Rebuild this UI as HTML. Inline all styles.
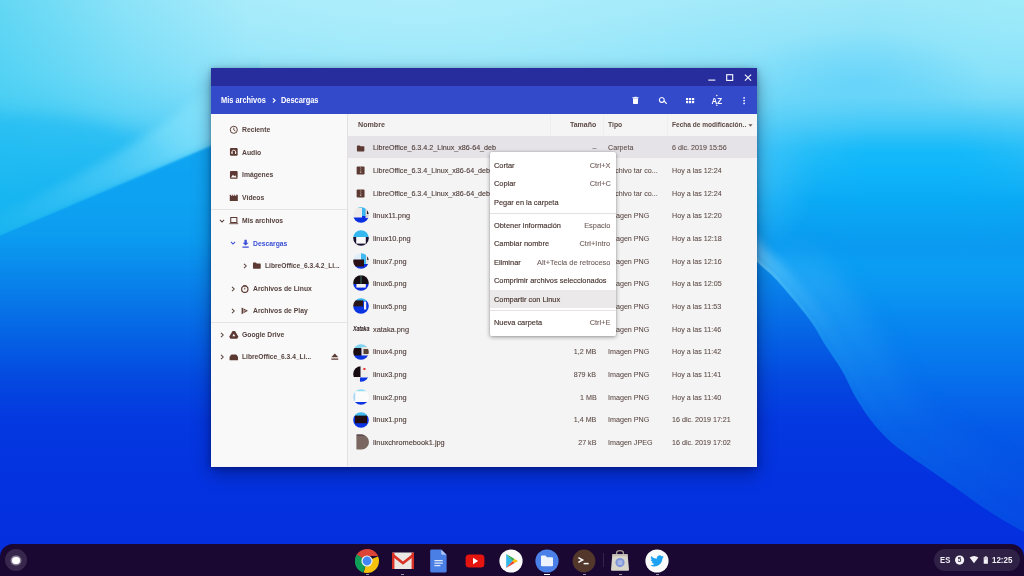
<!DOCTYPE html>
<html lang="es"><head><meta charset="utf-8"><title>Archivos</title>
<style>
html,body{margin:0;padding:0;background:#0633dc}
body{width:1024px;height:576px;overflow:hidden;position:relative;font-family:"Liberation Sans",sans-serif;-webkit-font-smoothing:antialiased}
.wall{position:absolute;left:0;top:0}
.abs{position:absolute;overflow:visible}
.win{position:absolute;left:211px;top:68px;width:546px;height:398.5px;background:#f5f4f4;box-shadow:0 6px 17px rgba(0,0,40,.40),0 1px 5px rgba(0,0,40,.30)}
.tb{position:absolute;left:211px;top:68px;width:546px;height:18px;background:#272d9d}
.tool{position:absolute;left:211px;top:86px;width:546px;height:27.6px;background:#334bcb}
.crumb{position:absolute;color:#fff;font-weight:bold;font-size:8.6px;line-height:12px;white-space:nowrap}
.sx{display:inline-block;transform:scaleX(var(--s));transform-origin:left center;white-space:nowrap}
.side{position:absolute;left:211px;top:113.6px;width:136.5px;height:352.9px;background:#faf9f9}
.vsep{position:absolute;left:347px;top:113.6px;width:1px;height:352.9px;background:#e2e0e0}
.list{position:absolute;left:348px;top:113.6px;width:409px;height:352.9px;background:#f5f4f4}
.hdr{position:absolute;left:348px;top:113.6px;width:409px;height:22.2px;background:#f6f5f5;border-bottom:1px solid #e6e4e4}
.csep{position:absolute;top:113.6px;width:1px;height:22.2px;background:#efeded}
.hsep{position:absolute;left:211px;width:136px;height:1px;background:#e6e3e3}
.sl{position:absolute;color:#55423e;font-weight:bold;font-size:7.9px;line-height:12px;white-space:nowrap;--s:1}
.sl .sx{transform:scaleX(calc(var(--s) * .86))}
.hl{position:absolute;color:#5a4844;font-weight:bold;font-size:7.5px;line-height:12px;white-space:nowrap}
.hl .sx{transform:scaleX(calc(var(--s) * .905))}
.selrow{position:absolute;left:348px;top:136.3px;width:409px;height:22.2px;background:#e5e3e7}
.ft{position:absolute;color:#4c3b37;-webkit-text-stroke:0.12px #4c3b37;font-size:8px;line-height:12px;white-space:nowrap;--fs:.893}
.ft.lt{color:#5c4b47;-webkit-text-stroke:0.08px #5c4b47}
.xa{position:absolute;color:#2a1a1c;font-size:6.4px;line-height:10px;font-weight:bold;font-style:italic;white-space:nowrap;letter-spacing:-0.3px}
.menu{position:absolute;left:489.5px;top:151.8px;width:126px;height:184px;background:#fff;border-radius:1.5px;box-shadow:0 1px 4px rgba(0,0,0,.4),0 0 1px rgba(0,0,0,.3)}
.mhl{position:absolute;left:489.5px;top:290.2px;width:126px;height:17.8px;background:#ebe9e9}
.msep{position:absolute;left:489.5px;width:126px;height:1px;background:#e4e1e1}
.mi{position:absolute;color:#47342f;-webkit-text-stroke:0.16px #47342f;font-size:8px;line-height:12px;white-space:nowrap;--ms:.924}
.mi.ms{color:#74635f;-webkit-text-stroke:0.12px #74635f}
.shelf{position:absolute;left:0;top:543.6px;width:1024px;height:40px;background:#1a0833;border-radius:13px 13px 0 0}
.launch{position:absolute;left:5px;top:549.3px;width:22px;height:22px;border-radius:50%;background:rgba(255,255,255,.13)}
.launch i{position:absolute;left:7.4px;top:7.4px;width:7.2px;height:7.2px;border-radius:50%;background:#fff;box-shadow:0 0 0 1.5px rgba(255,255,255,.4)}
.tray{position:absolute;left:934px;top:549px;width:85.5px;height:22.4px;border-radius:11.2px;background:#2e2145}
.tt{position:absolute;color:#f2eff5;font-weight:bold;font-size:8.4px;line-height:13px;white-space:nowrap}
</style></head><body>
<svg class="wall" width="1024" height="576" viewBox="0 0 1024 576"><defs><linearGradient id="gv" gradientUnits="userSpaceOnUse" x1="0" y1="0" x2="0" y2="576"><stop offset="0.0000" stop-color="#9ce7f9"/><stop offset="0.1302" stop-color="#80def9"/><stop offset="0.1910" stop-color="#68d5f8"/><stop offset="0.2604" stop-color="#3cc3f7"/><stop offset="0.3472" stop-color="#0eaaf4"/><stop offset="0.4167" stop-color="#0b9cf0"/><stop offset="0.5208" stop-color="#0878e8"/><stop offset="0.5903" stop-color="#0560e4"/><stop offset="0.6597" stop-color="#0448e0"/><stop offset="0.7292" stop-color="#0438e0"/><stop offset="0.8333" stop-color="#0432e0"/><stop offset="1.0000" stop-color="#042ede"/></linearGradient><linearGradient id="gR" gradientUnits="userSpaceOnUse" x1="0" y1="0" x2="0" y2="576"><stop offset="0.4080" stop-color="#0aa0f3" stop-opacity="0"/><stop offset="0.4549" stop-color="#0a9ef3" stop-opacity="1"/><stop offset="0.5035" stop-color="#0a96f2" stop-opacity="1"/><stop offset="0.5556" stop-color="#0888f0" stop-opacity="1"/><stop offset="0.6076" stop-color="#077cee" stop-opacity="1"/><stop offset="0.6944" stop-color="#0666ea" stop-opacity="1"/><stop offset="0.7465" stop-color="#055ae7" stop-opacity="1"/><stop offset="0.8681" stop-color="#054ae4" stop-opacity="1"/><stop offset="0.9462" stop-color="#0544e2" stop-opacity="1"/></linearGradient><linearGradient id="gB" gradientUnits="userSpaceOnUse" x1="0" y1="0" x2="0" y2="576"><stop offset="0.2083" stop-color="#10a6f3" stop-opacity="1"/><stop offset="0.3472" stop-color="#0ea2f2" stop-opacity="1"/><stop offset="0.4097" stop-color="#0c9cf0" stop-opacity="1"/><stop offset="0.4774" stop-color="#0a88ec" stop-opacity="0"/></linearGradient><linearGradient id="gL" x1="0" y1="0" x2="1" y2="0"><stop offset="0" stop-color="#1fc4ee" stop-opacity="0.46"/><stop offset="0.5" stop-color="#1fc4ee" stop-opacity="0.18"/><stop offset="1" stop-color="#1fc4ee" stop-opacity="0"/></linearGradient><linearGradient id="gW" gradientUnits="userSpaceOnUse" x1="0" y1="0" x2="230" y2="0"><stop offset="0" stop-color="#84e2fb" stop-opacity="0.05"/><stop offset="0.5" stop-color="#84e2fb" stop-opacity="0.36"/><stop offset="1" stop-color="#84e2fb" stop-opacity="0.95"/></linearGradient><radialGradient id="gT" cx="420" cy="-20" r="1" gradientUnits="userSpaceOnUse" gradientTransform="translate(420 -20) scale(460 210) translate(-420 20)"><stop offset="0" stop-color="#b6f1fc" stop-opacity="0.8"/><stop offset="0.5" stop-color="#b4f0fc" stop-opacity="0.42"/><stop offset="1" stop-color="#b4f0fc" stop-opacity="0"/></radialGradient><radialGradient id="gP" cx="757" cy="175" r="1" gradientUnits="userSpaceOnUse" gradientTransform="translate(757 175) scale(60 75) translate(-757 -175)"><stop offset="0" stop-color="#5ccdfb" stop-opacity="0.5"/><stop offset="1" stop-color="#66d0fb" stop-opacity="0"/></radialGradient><radialGradient id="gQ" cx="1024" cy="0" r="1" gradientUnits="userSpaceOnUse" gradientTransform="translate(1024 0) scale(160 120) translate(-1024 0)"><stop offset="0" stop-color="#a0eefa" stop-opacity="0.6"/><stop offset="1" stop-color="#a0eefa" stop-opacity="0"/></radialGradient><radialGradient id="gU" cx="860" cy="82" r="1" gradientUnits="userSpaceOnUse" gradientTransform="translate(860 82) scale(130 52) translate(-860 -82)"><stop offset="0" stop-color="#54ccfa" stop-opacity="0.5"/><stop offset="1" stop-color="#54ccfa" stop-opacity="0"/></radialGradient><linearGradient id="gE" gradientUnits="userSpaceOnUse" x1="0" y1="0" x2="0" y2="576"><stop offset="0.4427" stop-color="#a4e2fc" stop-opacity="0.95"/><stop offset="0.4948" stop-color="#6acafa" stop-opacity="0.8"/><stop offset="0.5903" stop-color="#2c9cf3" stop-opacity="0.55"/><stop offset="0.7292" stop-color="#1070ec" stop-opacity="0.45"/><stop offset="0.9375" stop-color="#0a54e6" stop-opacity="0.4"/></linearGradient><linearGradient id="gE2" gradientUnits="userSpaceOnUse" x1="0" y1="0" x2="0" y2="576"><stop offset="0.4167" stop-color="#34b0f8" stop-opacity="0.0"/><stop offset="0.4774" stop-color="#34b0f8" stop-opacity="0.55"/><stop offset="0.5903" stop-color="#2298f3" stop-opacity="0.42"/><stop offset="0.7292" stop-color="#1478ee" stop-opacity="0.25"/><stop offset="0.9028" stop-color="#0c5ce8" stop-opacity="0.12"/></linearGradient><filter id="b12" x="-30%" y="-30%" width="160%" height="160%"><feGaussianBlur color-interpolation-filters="sRGB" stdDeviation="11"/></filter><linearGradient id="gS" gradientUnits="userSpaceOnUse" x1="0" y1="0" x2="0" y2="576"><stop offset="0.1701" stop-color="#0cb8fa" stop-opacity="0"/><stop offset="0.2222" stop-color="#0cb8fa" stop-opacity="0.3"/><stop offset="0.2639" stop-color="#08b6fa" stop-opacity="0.74"/><stop offset="0.2986" stop-color="#08b4fa" stop-opacity="0.8"/><stop offset="0.3611" stop-color="#06a8f6" stop-opacity="0.55"/><stop offset="0.4427" stop-color="#0898f2" stop-opacity="0"/></linearGradient><linearGradient id="gSm" gradientUnits="userSpaceOnUse" x1="757" y1="0" x2="1024" y2="0"><stop offset="0" stop-color="#fff" stop-opacity="0.2"/><stop offset="0.4" stop-color="#fff" stop-opacity="1"/><stop offset="0.75" stop-color="#fff" stop-opacity="1"/><stop offset="1" stop-color="#fff" stop-opacity="0.6"/></linearGradient><mask id="mS"><rect x="700" y="0" width="330" height="576" fill="url(#gSm)"/></mask><filter id="b2" x="-10%" y="-10%" width="120%" height="120%"><feGaussianBlur color-interpolation-filters="sRGB" stdDeviation="1.2"/></filter><filter id="b5" x="-20%" y="-20%" width="140%" height="140%"><feGaussianBlur color-interpolation-filters="sRGB" stdDeviation="5"/></filter><filter id="b8" x="-20%" y="-20%" width="140%" height="140%"><feGaussianBlur color-interpolation-filters="sRGB" stdDeviation="8"/></filter><clipPath id="cR"><path d="M735.0 238.0 C738.7 242.0 750.1 255.0 757.0 262.0 C763.9 269.0 767.8 270.5 776.5 280.0 C785.2 289.5 800.8 308.1 809.0 319.0 C817.2 329.9 820.0 336.9 825.5 345.5 C831.0 354.1 836.9 361.8 842.0 370.5 C847.1 379.2 850.8 389.2 856.0 398.0 C861.2 406.8 867.0 415.5 873.0 423.0 C879.0 430.5 885.1 436.9 892.0 443.0 C898.9 449.1 907.0 454.2 914.5 459.5 C922.0 464.8 929.1 469.4 936.7 474.7 C944.3 479.9 951.1 484.8 960.0 491.0 C968.9 497.2 979.3 505.2 990.0 512.0 C1000.7 518.8 1012.3 525.7 1024.0 532.0 C1035.7 538.3 1054.0 547.0 1060.0 550.0 L1060 200 L735 200 Z"/></clipPath><clipPath id="cA"><path d="M-30 0 L260 0 L260 125.2 L-30 248.8 Z"/></clipPath></defs><rect width="1024" height="576" fill="url(#gv)"/><rect width="1024" height="200" fill="url(#gT)"/><rect x="860" width="164" height="130" fill="url(#gQ)"/><rect x="720" y="20" width="280" height="120" fill="url(#gU)"/><rect x="0" y="0" width="250" height="260" fill="url(#gL)" clip-path="url(#cA)"/><g clip-path="url(#cA)"><path d="M-30 112 C 40 112, 110 116, 170 150 L 120 230 L -30 260 Z" fill="#18b6f2" opacity="0.5" filter="url(#b8)"/><path d="M260 60 L260 125.2 L-30 248.8 L-30 226 C 60 188, 150 140, 200 95 Z" fill="url(#gW)" filter="url(#b5)"/></g><path d="M-30 248.8 L260 125.2 L260 280 L-30 280 Z" fill="url(#gB)" filter="url(#b2)"/><rect x="757" y="100" width="80" height="160" fill="url(#gP)"/><rect x="740" y="90" width="290" height="170" fill="url(#gS)" mask="url(#mS)"/><path d="M735.0 238.0 C738.7 242.0 750.1 255.0 757.0 262.0 C763.9 269.0 767.8 270.5 776.5 280.0 C785.2 289.5 800.8 308.1 809.0 319.0 C817.2 329.9 820.0 336.9 825.5 345.5 C831.0 354.1 836.9 361.8 842.0 370.5 C847.1 379.2 850.8 389.2 856.0 398.0 C861.2 406.8 867.0 415.5 873.0 423.0 C879.0 430.5 885.1 436.9 892.0 443.0 C898.9 449.1 907.0 454.2 914.5 459.5 C922.0 464.8 929.1 469.4 936.7 474.7 C944.3 479.9 951.1 484.8 960.0 491.0 C968.9 497.2 979.3 505.2 990.0 512.0 C1000.7 518.8 1012.3 525.7 1024.0 532.0 C1035.7 538.3 1054.0 547.0 1060.0 550.0 L1060 200 L735 200 Z" fill="url(#gR)"/><g clip-path="url(#cR)"><path d="M742.0 235.0 C745.7 239.0 757.1 252.0 764.0 259.0 C770.9 266.0 774.8 267.5 783.5 277.0 C792.2 286.5 807.8 305.1 816.0 316.0 C824.2 326.9 827.0 333.9 832.5 342.5 C838.0 351.1 843.9 358.8 849.0 367.5 C854.1 376.2 857.8 386.2 863.0 395.0 C868.2 403.8 874.0 412.5 880.0 420.0 C886.0 427.5 892.1 433.9 899.0 440.0 C905.9 446.1 914.0 451.2 921.5 456.5 C929.0 461.8 936.1 466.4 943.7 471.7 C951.3 476.9 958.1 481.8 967.0 488.0 C975.9 494.2 986.3 502.2 997.0 509.0 C1007.7 515.8 1019.3 522.7 1031.0 529.0 C1042.7 535.3 1061.0 544.0 1067.0 547.0" fill="none" stroke="url(#gE)" stroke-width="16" filter="url(#b5)" opacity="0.55"/><path d="M759.0 227.0 C762.7 231.0 774.1 244.0 781.0 251.0 C787.9 258.0 791.8 259.5 800.5 269.0 C809.2 278.5 824.8 297.1 833.0 308.0 C841.2 318.9 844.0 325.9 849.5 334.5 C855.0 343.1 860.9 350.8 866.0 359.5 C871.1 368.2 874.8 378.2 880.0 387.0 C885.2 395.8 891.0 404.5 897.0 412.0 C903.0 419.5 909.1 425.9 916.0 432.0 C922.9 438.1 931.0 443.2 938.5 448.5 C946.0 453.8 953.1 458.4 960.7 463.7 C968.3 468.9 975.1 473.8 984.0 480.0 C992.9 486.2 1003.3 494.2 1014.0 501.0 C1024.7 507.8 1036.3 514.7 1048.0 521.0 C1059.7 527.3 1078.0 536.0 1084.0 539.0" fill="none" stroke="url(#gE2)" stroke-width="46" filter="url(#b12)"/><path d="M736.5 237.2 C740.2 241.2 751.6 254.2 758.5 261.2 C765.4 268.2 769.3 269.7 778.0 279.2 C786.7 288.7 802.3 307.3 810.5 318.2 C818.7 329.1 821.5 336.1 827.0 344.7 C832.5 353.3 838.4 360.9 843.5 369.7 C848.6 378.4 852.3 388.4 857.5 397.2 C862.7 405.9 868.5 414.7 874.5 422.2 C880.5 429.7 886.6 436.1 893.5 442.2 C900.4 448.3 908.5 453.4 916.0 458.7 C923.5 464.0 930.6 468.6 938.2 473.9 C945.8 479.1 952.6 484.0 961.5 490.2 C970.4 496.4 980.8 504.4 991.5 511.2 C1002.2 518.0 1013.8 524.9 1025.5 531.2 C1037.2 537.5 1055.5 546.2 1061.5 549.2" fill="none" stroke="url(#gE)" stroke-width="2" filter="url(#b2)" opacity="0.6"/></g></svg>
<div class="win"></div>

<div class="tb"></div>
<div class="tool"></div>
<svg class="abs" style="left:700px;top:68px" width="57" height="46" viewBox="700 68 57 46">
  <g stroke="#fff" stroke-width="1.1" fill="none">
    <path d="M708.3 80.1 H715.3"/>
    <rect x="726.7" y="74.7" width="6" height="5.7"/>
    <path d="M744.9 74.6 L751.1 80.6 M751.1 74.6 L744.9 80.6"/>
  </g>
</svg>
<svg class="abs" style="left:625px;top:92px;will-change:transform" width="130" height="18" viewBox="625 92 130 18">
  <g fill="#fff">
    <!-- trash -->
    <path d="M633 98.6 h5 v4.6 q0 .7 -.7 .7 h-3.6 q-.7 0 -.7 -.7 z M632.4 97.3 h1.8 l.5 -.6 h1.6 l.5 .6 h1.8 v.9 h-6.2 z"/>
    <!-- search -->
    <path d="M661.8 96.9 a3 3 0 1 0 0.01 0 z M661.8 98 a1.9 1.9 0 1 1 -0.01 0 z" fill-rule="evenodd"/>
    <path d="M663.6 101.3 l.8 -.8 2.7 2.8 -.9 .9 z"/>
    <!-- grid -->
    <g>
      <rect x="686" y="98" width="2.2" height="2.2"/><rect x="689" y="98" width="2.2" height="2.2"/><rect x="692" y="98" width="2.2" height="2.2"/>
      <rect x="686" y="101" width="2.2" height="2.2"/><rect x="689" y="101" width="2.2" height="2.2"/><rect x="692" y="101" width="2.2" height="2.2"/>
    </g>
    <!-- more -->
    <circle cx="744.1" cy="97.8" r="0.85"/><circle cx="744.1" cy="100.6" r="0.85"/><circle cx="744.1" cy="103.4" r="0.85"/>
    <!-- az dots -->
    <circle cx="716.8" cy="95.4" r="0.75"/><circle cx="716.8" cy="105.2" r="0.75"/>
  </g>
  <text x="711.4" y="103.7" font-family="Liberation Sans, sans-serif" font-weight="bold" font-size="8.6" fill="#fff" textLength="10.6" lengthAdjust="spacingAndGlyphs">AZ</text>
</svg>
<div class="crumb" style="left:221px;top:94.0px"><span class="sx" style="--s:.862">Mis archivos</span></div>
<svg class="abs" style="left:270px;top:96px" width="8" height="9" viewBox="0 0 8 9"><path d="M2.9 2.3 L5.1 4.5 L2.9 6.7" fill="none" stroke="#fff" stroke-width="1.15"/></svg>
<div class="crumb" style="left:281px;top:94.0px"><span class="sx" style="--s:.862">Descargas</span></div>

<div class="side"></div>
<svg class="abs" style="left:229.0px;top:124.7px" width="9.6" height="9.6" viewBox="0 0 10 10"><circle cx="5" cy="5" r="3.7" fill="none" stroke="#5c3a33" stroke-width="1"/><path d="M5 2.8 V5.2 L6.8 6.2" fill="none" stroke="#5c3a33" stroke-width="0.9"/></svg>
<div class="sl" style="left:241.9px;top:123.5px;"><span class="sx" style="--s:1.0">Reciente</span></div>
<svg class="abs" style="left:229.0px;top:147.3px" width="9.6" height="9.6" viewBox="0 0 10 10"><rect x="1" y="1" width="8" height="8" rx="1" fill="#5c3a33"/><path d="M3 6.5 v-1.2 a2 2 0 0 1 4 0 v1.2" stroke="#faf9f9" stroke-width="0.9" fill="none"/><rect x="2.6" y="5.4" width="1.2" height="1.8" fill="#faf9f9"/><rect x="6.2" y="5.4" width="1.2" height="1.8" fill="#faf9f9"/></svg>
<div class="sl" style="left:241.9px;top:146.6px;"><span class="sx" style="--s:1.0">Audio</span></div>
<svg class="abs" style="left:229.0px;top:169.6px" width="9.6" height="9.6" viewBox="0 0 10 10"><rect x="1" y="1" width="8" height="8" rx="1" fill="#5c3a33"/><path d="M2 7.7 L4.1 4.9 L5.5 6.5 L6.5 5.5 L8 7.7 Z" fill="#faf9f9"/></svg>
<div class="sl" style="left:241.9px;top:168.9px;"><span class="sx" style="--s:1.0">Imágenes</span></div>
<svg class="abs" style="left:229.0px;top:192.5px" width="9.6" height="9.6" viewBox="0 0 10 10"><path d="M0.8 1.7 h1.1 l.8 1.5 h1 l-.8 -1.5 h1.1 l.8 1.5 h1 l-.8 -1.5 h1.1 l.8 1.5 h1 l-.8 -1.5 h2.1 v6.6 h-8.400 z" fill="#5c3a33"/></svg>
<div class="sl" style="left:241.9px;top:191.8px;"><span class="sx" style="--s:1.0">Vídeos</span></div>
<div class="hsep" style="top:208.6px"></div>
<svg class="abs" style="left:229.0px;top:215.8px" width="9.6" height="9.6" viewBox="0 0 10 10"><path d="M1.8 1.5 h6.4 v5.2 h-6.4 z" fill="none" stroke="#5c3a33" stroke-width="1.1"/><path d="M0.4 7.6 h9.2 v0.9 h-9.2 z" fill="#5c3a33"/></svg>
<div class="sl" style="left:241.9px;top:214.6px;"><span class="sx" style="--s:1.0">Mis archivos</span></div>
<svg class="abs" style="left:217.8px;top:216.6px" width="8" height="8" viewBox="0 0 8 8"><path d="M1.9 2.9 L4 5.0 L6.1 2.9" fill="none" stroke="#55423e" stroke-width="1.05"/></svg>
<svg class="abs" style="left:240.6px;top:238.6px" width="9.6" height="9.6" viewBox="0 0 10 10"><path d="M3.6 0.8 h2.4 v3 h1.9 l-3.1 3 l-3.1 -3 h1.9 z M1.5 7.9 h6.6 v1.1 h-6.6 z" fill="#3a4fd6"/></svg>
<div class="sl" style="left:253.2px;top:238.3px;color:#3a4fd6;"><span class="sx" style="--s:1.0">Descargas</span></div>
<svg class="abs" style="left:229.2px;top:239.4px" width="8" height="8" viewBox="0 0 8 8"><path d="M1.9 2.9 L4 5.0 L6.1 2.9" fill="none" stroke="#3a4fd6" stroke-width="1.05"/></svg>
<svg class="abs" style="left:252.4px;top:261.1px" width="9.6" height="9.6" viewBox="0 0 10 10"><path d="M1 2.2 q0 -.7 .7 -.7 h2.3 l1 1 h3.4 q.7 0 .7 .7 v4.2 q0 .7 -.7 .7 h-6.7 q-.7 0 -.7 -.7 z" fill="#5c3a33"/></svg>
<div class="sl" style="left:264.8px;top:259.9px;"><span class="sx" style="--s:0.985">LibreOffice_6.3.4.2_Li...</span></div>
<svg class="abs" style="left:240.6px;top:261.9px" width="8" height="8" viewBox="0 0 8 8"><path d="M3.0 1.8 L5.2 4 L3.0 6.2" fill="none" stroke="#55423e" stroke-width="1.05"/></svg>
<svg class="abs" style="left:239.8px;top:283.8px" width="9.6" height="9.6" viewBox="0 0 10 10"><circle cx="5" cy="5.4" r="3.3" fill="none" stroke="#5c3a33" stroke-width="1.25"/><path d="M3.3 1.2 h3.4 v1.3 h-3.400 z" fill="#5c3a33"/><path d="M5 3.9 v1.9" stroke="#5c3a33" stroke-width="1"/></svg>
<div class="sl" style="left:253.2px;top:282.6px;"><span class="sx" style="--s:1.0">Archivos de Linux</span></div>
<svg class="abs" style="left:228.8px;top:284.6px" width="8" height="8" viewBox="0 0 8 8"><path d="M3.0 1.8 L5.2 4 L3.0 6.2" fill="none" stroke="#55423e" stroke-width="1.05"/></svg>
<svg class="abs" style="left:239.6px;top:306.4px" width="9.6" height="9.6" viewBox="0 0 10 10"><path d="M1.7 1.5 L8.3 5 L1.7 8.500 Z" fill="#5c3a33"/><path d="M3.6 2.2 V7.800" stroke="#faf9f9" stroke-width="0.55"/><path d="M4.6 4.1 L6.2 5 L4.600 5.900 Z" fill="#faf9f9"/></svg>
<div class="sl" style="left:253.2px;top:305.2px;"><span class="sx" style="--s:1.0">Archivos de Play</span></div>
<svg class="abs" style="left:228.8px;top:307.2px" width="8" height="8" viewBox="0 0 8 8"><path d="M3.0 1.8 L5.2 4 L3.0 6.2" fill="none" stroke="#55423e" stroke-width="1.05"/></svg>
<div class="hsep" style="top:322.2px"></div>
<svg class="abs" style="left:229.0px;top:329.7px" width="9.6" height="9.6" viewBox="0 0 10 10"><path d="M3.7 1.1 h2.6 l3.5 6 l-1.3 2.100 h-7 l-1.300 -2.100 z" fill="#5c3a33"/><path d="M5 3.9 L6.5 6.600 H3.5 Z" fill="#faf9f9"/></svg>
<div class="sl" style="left:241.9px;top:328.5px;"><span class="sx" style="--s:1.0">Google Drive</span></div>
<svg class="abs" style="left:217.6px;top:330.5px" width="8" height="8" viewBox="0 0 8 8"><path d="M3.0 1.8 L5.2 4 L3.0 6.2" fill="none" stroke="#55423e" stroke-width="1.05"/></svg>
<svg class="abs" style="left:229.0px;top:352.2px" width="9.6" height="9.6" viewBox="0 0 10 10"><path d="M1.300 4.4 q0 -1.9 1.800 -1.900 h3.800 q1.800 0 1.800 1.900 l.7 .5 v3.100 q0 .7 -.7 .7 h-7.400 q-.7 0 -.7 -.7 v-3.100 z" fill="#5c3a33"/></svg>
<div class="sl" style="left:241.9px;top:351.0px;"><span class="sx" style="--s:0.985">LibreOffice_6.3.4_Li...</span></div>
<svg class="abs" style="left:217.6px;top:353.0px" width="8" height="8" viewBox="0 0 8 8"><path d="M3.0 1.8 L5.2 4 L3.0 6.2" fill="none" stroke="#55423e" stroke-width="1.05"/></svg>
<svg class="abs" style="left:329.5px;top:352.2px" width="9.6" height="9.6" viewBox="0 0 10 10"><path d="M5 1.6 L8.6 5.6 H1.4 Z M1.4 6.8 h7.2 v1.3 h-7.2 z" fill="#5c3a33"/></svg>
<div class="list"></div>
<div class="vsep"></div>
<div class="hdr"></div>
<div class="csep" style="left:550.2px"></div>
<div class="csep" style="left:603.4px"></div>
<div class="csep" style="left:666.8px"></div>
<div class="hl" style="left:357.9px;top:118.8px"><span class="sx" style="--s:1.05">Nombre</span></div>
<div class="hl" style="left:546.3px;width:50px;text-align:right;top:118.8px"><span class="sx" style="--s:1.03;transform-origin:right center">Tamaño</span></div>
<div class="hl" style="left:608.3px;top:118.8px"><span class="sx" style="--s:1">Tipo</span></div>
<div class="hl" style="left:671.7px;top:118.8px"><span class="sx" style="--s:.965">Fecha de modificación..</span></div>
<svg class="abs" style="left:747.6px;top:122.6px" width="5" height="5" viewBox="0 0 5 5"><path d="M0.5 1.2 h4 l-2 2.6 z" fill="#6a5a56"/></svg>
<div class="selrow"></div>
<svg class="abs" style="left:356.3px;top:143.7px" width="9.2" height="9.2" viewBox="0 0 10 10"><path d="M1 2.2 q0 -.7 .7 -.7 h2.3 l1 1 h3.4 q.7 0 .7 .7 v4.2 q0 .7 -.7 .7 h-6.7 q-.7 0 -.7 -.7 z" fill="#5c3a33"/></svg>
<div class="ft" style="left:372.6px;top:142.1px"><span class="sx" style="--s:var(--fs)">LibreOffice_6.3.4.2_Linux_x86-64_deb</span></div>
<div class="ft lt" style="left:546.3px;width:50px;text-align:right;top:142.1px"><span class="sx" style="--s:var(--fs);transform-origin:right center">–</span></div>
<div class="ft lt" style="left:608.3px;top:142.1px"><span class="sx" style="--s:var(--fs)">Carpeta</span></div>
<div class="ft lt" style="left:671.7px;top:142.1px"><span class="sx" style="--s:var(--fs)">6 dic. 2019 15:56</span></div>
<svg class="abs" style="left:356.3px;top:166.4px" width="9.2" height="9.2" viewBox="0 0 10 10"><rect x="0.7" y="0.6" width="8.6" height="8.6" rx="0.9" fill="#5c3a33"/><path d="M4.6 1.6 h.9 M5 2.7 h.9 M4.6 3.8 h.9 M5 4.9 h.9" stroke="#c9b8b2" stroke-width="0.7"/><rect x="4.3" y="5.9" width="1.5" height="1.7" fill="#b9a59e"/></svg>
<div class="ft" style="left:372.6px;top:164.8px"><span class="sx" style="--s:var(--fs)">LibreOffice_6.3.4_Linux_x86-64_deb</span></div>
<div class="ft lt" style="left:608.3px;top:164.8px"><span class="sx" style="--s:var(--fs)">Archivo tar co...</span></div>
<div class="ft lt" style="left:671.7px;top:164.8px"><span class="sx" style="--s:var(--fs)">Hoy a las 12:24</span></div>
<svg class="abs" style="left:356.3px;top:189.1px" width="9.2" height="9.2" viewBox="0 0 10 10"><rect x="0.7" y="0.6" width="8.6" height="8.6" rx="0.9" fill="#5c3a33"/><path d="M4.6 1.6 h.9 M5 2.7 h.9 M4.6 3.8 h.9 M5 4.9 h.9" stroke="#c9b8b2" stroke-width="0.7"/><rect x="4.3" y="5.9" width="1.5" height="1.7" fill="#b9a59e"/></svg>
<div class="ft" style="left:372.6px;top:187.5px"><span class="sx" style="--s:var(--fs)">LibreOffice_6.3.4_Linux_x86-64_deb</span></div>
<div class="ft lt" style="left:608.3px;top:187.5px"><span class="sx" style="--s:var(--fs)">Archivo tar co...</span></div>
<div class="ft lt" style="left:671.7px;top:187.5px"><span class="sx" style="--s:var(--fs)">Hoy a las 12:24</span></div>
<svg class="abs" style="left:353.3px;top:207.4px" width="16" height="16" viewBox="0 0 16 16"><defs><clipPath id="c3"><circle cx="8" cy="8" r="7.8"/></clipPath><filter id="tb3"><feGaussianBlur color-interpolation-filters="sRGB" stdDeviation="0.45"/></filter></defs><g clip-path="url(#c3)"><g filter="url(#tb3)"><rect width="16" height="16" fill="#0a2fe0"/><rect width="16" height="9" fill="#38b6f0"/><rect x="0" y="1" width="9" height="9.5" fill="#eeeaea"/><rect x="12.5" y="2" width="3.5" height="9" fill="#d9d3d3"/><rect x="14" y="2" width="2" height="5" fill="#2a1418"/></g></g></svg>
<div class="ft" style="left:372.6px;top:210.2px"><span class="sx" style="--s:calc(var(--fs) * 1.032)">linux11.png</span></div>
<div class="ft lt" style="left:608.3px;top:210.2px"><span class="sx" style="--s:var(--fs)">Imagen PNG</span></div>
<div class="ft lt" style="left:671.7px;top:210.2px"><span class="sx" style="--s:var(--fs)">Hoy a las 12:20</span></div>
<svg class="abs" style="left:353.3px;top:230.1px" width="16" height="16" viewBox="0 0 16 16"><defs><clipPath id="c4"><circle cx="8" cy="8" r="7.8"/></clipPath><filter id="tb4"><feGaussianBlur color-interpolation-filters="sRGB" stdDeviation="0.45"/></filter></defs><g clip-path="url(#c4)"><g filter="url(#tb4)"><rect width="16" height="16" fill="#1a1030"/><rect width="16" height="7" fill="#35b8f0"/><rect x="3.2" y="7" width="9.6" height="6.6" fill="#fbfafa"/></g></g></svg>
<div class="ft" style="left:372.6px;top:232.9px"><span class="sx" style="--s:calc(var(--fs) * 1.032)">linux10.png</span></div>
<div class="ft lt" style="left:608.3px;top:232.9px"><span class="sx" style="--s:var(--fs)">Imagen PNG</span></div>
<div class="ft lt" style="left:671.7px;top:232.9px"><span class="sx" style="--s:var(--fs)">Hoy a las 12:18</span></div>
<svg class="abs" style="left:353.3px;top:252.8px" width="16" height="16" viewBox="0 0 16 16"><defs><clipPath id="c5"><circle cx="8" cy="8" r="7.8"/></clipPath><filter id="tb5"><feGaussianBlur color-interpolation-filters="sRGB" stdDeviation="0.45"/></filter></defs><g clip-path="url(#c5)"><g filter="url(#tb5)"><rect width="16" height="16" fill="#0a2fe0"/><rect width="16" height="8" fill="#dfeef8"/><rect x="8" y="0" width="5" height="11" fill="#40baf0"/><rect x="0" y="6.5" width="11" height="7" fill="#2a1014"/><rect x="13" y="3" width="3" height="8" fill="#e5e0dc"/><rect x="14.2" y="3" width="2" height="4" fill="#201018"/></g></g></svg>
<div class="ft" style="left:372.6px;top:255.6px"><span class="sx" style="--s:calc(var(--fs) * 1.032)">linux7.png</span></div>
<div class="ft lt" style="left:608.3px;top:255.6px"><span class="sx" style="--s:var(--fs)">Imagen PNG</span></div>
<div class="ft lt" style="left:671.7px;top:255.6px"><span class="sx" style="--s:var(--fs)">Hoy a las 12:16</span></div>
<svg class="abs" style="left:353.3px;top:275.4px" width="16" height="16" viewBox="0 0 16 16"><defs><clipPath id="c6"><circle cx="8" cy="8" r="7.8"/></clipPath><filter id="tb6"><feGaussianBlur color-interpolation-filters="sRGB" stdDeviation="0.45"/></filter></defs><g clip-path="url(#c6)"><g filter="url(#tb6)"><rect width="16" height="16" fill="#0a2fe0"/><rect width="16" height="9" fill="#150c12"/><rect x="3.4" y="9" width="9.400" height="3.600" fill="#f4f2f2"/><rect x="7.6" y="0" width="0.8" height="9" fill="#4a8a7a"/></g></g></svg>
<div class="ft" style="left:372.6px;top:278.2px"><span class="sx" style="--s:calc(var(--fs) * 1.032)">linux6.png</span></div>
<div class="ft lt" style="left:608.3px;top:278.2px"><span class="sx" style="--s:var(--fs)">Imagen PNG</span></div>
<div class="ft lt" style="left:671.7px;top:278.2px"><span class="sx" style="--s:var(--fs)">Hoy a las 12:05</span></div>
<svg class="abs" style="left:353.3px;top:298.1px" width="16" height="16" viewBox="0 0 16 16"><defs><clipPath id="c7"><circle cx="8" cy="8" r="7.8"/></clipPath><filter id="tb7"><feGaussianBlur color-interpolation-filters="sRGB" stdDeviation="0.45"/></filter></defs><g clip-path="url(#c7)"><g filter="url(#tb7)"><rect width="16" height="16" fill="#0a34e2"/><rect width="16" height="3" fill="#3cb6f0"/><rect x="0" y="2.4" width="10" height="6" fill="#2a1418"/><rect x="11" y="3.5" width="2.2" height="8" fill="#f2f0f0"/></g></g></svg>
<div class="ft" style="left:372.6px;top:300.9px"><span class="sx" style="--s:calc(var(--fs) * 1.032)">linux5.png</span></div>
<div class="ft lt" style="left:608.3px;top:300.9px"><span class="sx" style="--s:var(--fs)">Imagen PNG</span></div>
<div class="ft lt" style="left:671.7px;top:300.9px"><span class="sx" style="--s:var(--fs)">Hoy a las 11:53</span></div>
<div class="xa" style="left:352.6px;top:323.6px"><span class="sx" style="--s:.86">Xataka</span></div>
<div class="ft" style="left:372.6px;top:323.6px"><span class="sx" style="--s:calc(var(--fs) * 1.032)">xataka.png</span></div>
<div class="ft lt" style="left:608.3px;top:323.6px"><span class="sx" style="--s:var(--fs)">Imagen PNG</span></div>
<div class="ft lt" style="left:671.7px;top:323.6px"><span class="sx" style="--s:var(--fs)">Hoy a las 11:46</span></div>
<svg class="abs" style="left:353.3px;top:343.5px" width="16" height="16" viewBox="0 0 16 16"><defs><clipPath id="c9"><circle cx="8" cy="8" r="7.8"/></clipPath><filter id="tb9"><feGaussianBlur color-interpolation-filters="sRGB" stdDeviation="0.45"/></filter></defs><g clip-path="url(#c9)"><g filter="url(#tb9)"><rect width="16" height="16" fill="#0a34e2"/><rect width="16" height="5" fill="#7fd4f2"/><rect x="0" y="4" width="8.5" height="7.5" fill="#1a0c10"/><rect x="8.5" y="3" width="7.5" height="8.5" fill="#e8e4e0"/><rect x="10.5" y="5" width="5.5" height="5" fill="#5a4438"/></g></g></svg>
<div class="ft" style="left:372.6px;top:346.3px"><span class="sx" style="--s:calc(var(--fs) * 1.032)">linux4.png</span></div>
<div class="ft lt" style="left:546.3px;width:50px;text-align:right;top:346.3px"><span class="sx" style="--s:var(--fs);transform-origin:right center">1,2 MB</span></div>
<div class="ft lt" style="left:608.3px;top:346.3px"><span class="sx" style="--s:var(--fs)">Imagen PNG</span></div>
<div class="ft lt" style="left:671.7px;top:346.3px"><span class="sx" style="--s:var(--fs)">Hoy a las 11:42</span></div>
<svg class="abs" style="left:353.3px;top:366.2px" width="16" height="16" viewBox="0 0 16 16"><defs><clipPath id="c10"><circle cx="8" cy="8" r="7.8"/></clipPath><filter id="tb10"><feGaussianBlur color-interpolation-filters="sRGB" stdDeviation="0.45"/></filter></defs><g clip-path="url(#c10)"><g filter="url(#tb10)"><rect width="16" height="16" fill="#f1eeee"/><rect x="0" y="0" width="7.5" height="11" fill="#160a10"/><rect x="7" y="11.5" width="9" height="4.5" fill="#0a34e2"/><rect x="10.4" y="2" width="2" height="2" fill="#e8302a"/></g></g></svg>
<div class="ft" style="left:372.6px;top:369.0px"><span class="sx" style="--s:calc(var(--fs) * 1.032)">linux3.png</span></div>
<div class="ft lt" style="left:546.3px;width:50px;text-align:right;top:369.0px"><span class="sx" style="--s:var(--fs);transform-origin:right center">879 kB</span></div>
<div class="ft lt" style="left:608.3px;top:369.0px"><span class="sx" style="--s:var(--fs)">Imagen PNG</span></div>
<div class="ft lt" style="left:671.7px;top:369.0px"><span class="sx" style="--s:var(--fs)">Hoy a las 11:41</span></div>
<svg class="abs" style="left:353.3px;top:388.9px" width="16" height="16" viewBox="0 0 16 16"><defs><clipPath id="c11"><circle cx="8" cy="8" r="7.8"/></clipPath><filter id="tb11"><feGaussianBlur color-interpolation-filters="sRGB" stdDeviation="0.45"/></filter></defs><g clip-path="url(#c11)"><g filter="url(#tb11)"><rect width="16" height="16" fill="#fbfbfb"/><rect width="16" height="2.2" fill="#8edcf5"/><rect x="0" y="2" width="2.2" height="10" fill="#a8d8f4"/><rect x="0" y="13" width="16" height="3" fill="#0a34e2"/></g></g></svg>
<div class="ft" style="left:372.6px;top:391.7px"><span class="sx" style="--s:calc(var(--fs) * 1.032)">linux2.png</span></div>
<div class="ft lt" style="left:546.3px;width:50px;text-align:right;top:391.7px"><span class="sx" style="--s:var(--fs);transform-origin:right center">1 MB</span></div>
<div class="ft lt" style="left:608.3px;top:391.7px"><span class="sx" style="--s:var(--fs)">Imagen PNG</span></div>
<div class="ft lt" style="left:671.7px;top:391.7px"><span class="sx" style="--s:var(--fs)">Hoy a las 11:40</span></div>
<svg class="abs" style="left:353.3px;top:411.6px" width="16" height="16" viewBox="0 0 16 16"><defs><clipPath id="c12"><circle cx="8" cy="8" r="7.8"/></clipPath><filter id="tb12"><feGaussianBlur color-interpolation-filters="sRGB" stdDeviation="0.45"/></filter></defs><g clip-path="url(#c12)"><g filter="url(#tb12)"><rect width="16" height="16" fill="#0a34e2"/><rect width="16" height="4" fill="#40baf0"/><rect x="2" y="3.6" width="12" height="7.6" fill="#200c10"/></g></g></svg>
<div class="ft" style="left:372.6px;top:414.4px"><span class="sx" style="--s:calc(var(--fs) * 1.032)">linux1.png</span></div>
<div class="ft lt" style="left:546.3px;width:50px;text-align:right;top:414.4px"><span class="sx" style="--s:var(--fs);transform-origin:right center">1,4 MB</span></div>
<div class="ft lt" style="left:608.3px;top:414.4px"><span class="sx" style="--s:var(--fs)">Imagen PNG</span></div>
<div class="ft lt" style="left:671.7px;top:414.4px"><span class="sx" style="--s:var(--fs)">16 dic. 2019 17:21</span></div>
<svg class="abs" style="left:353.3px;top:434.3px" width="16" height="16" viewBox="0 0 16 16"><defs><filter id="tbj"><feGaussianBlur color-interpolation-filters="sRGB" stdDeviation="0.4"/></filter></defs><path d="M3.4 1.1 q0 -.6 .6 -.6 h4.600 a7.400 7.500 0 0 1 0 15 h-4.600 q-.6 0 -.6 -.6 z" fill="#7b6762" filter="url(#tbj)"/><path d="M3.6 0.5 h5 q1.4 0 2.400 .6 l-.5 .7 q-1 -.4 -1.900 -.4 h-5 z" fill="#3a2a36" opacity=".85"/></svg>
<div class="ft" style="left:372.6px;top:437.1px"><span class="sx" style="--s:calc(var(--fs) * 1.032)">linuxchromebook1.jpg</span></div>
<div class="ft lt" style="left:546.3px;width:50px;text-align:right;top:437.1px"><span class="sx" style="--s:var(--fs);transform-origin:right center">27 kB</span></div>
<div class="ft lt" style="left:608.3px;top:437.1px"><span class="sx" style="--s:var(--fs)">Imagen JPEG</span></div>
<div class="ft lt" style="left:671.7px;top:437.1px"><span class="sx" style="--s:var(--fs)">16 dic. 2019 17:02</span></div>
<div class="menu"></div>
<div class="mhl"></div>
<div class="msep" style="top:213.4px"></div>
<div class="msep" style="top:310.3px"></div>
<div class="mi" style="left:493.9px;top:159.5px"><span class="sx" style="--s:var(--ms)">Cortar</span></div>
<div class="mi ms" style="left:500px;width:110.6px;text-align:right;top:159.5px"><span class="sx" style="--s:var(--ms);transform-origin:right center">Ctrl+X</span></div>
<div class="mi" style="left:493.9px;top:177.5px"><span class="sx" style="--s:var(--ms)">Copiar</span></div>
<div class="mi ms" style="left:500px;width:110.6px;text-align:right;top:177.5px"><span class="sx" style="--s:var(--ms);transform-origin:right center">Ctrl+C</span></div>
<div class="mi" style="left:493.9px;top:197.0px"><span class="sx" style="--s:var(--ms)">Pegar en la carpeta</span></div>
<div class="mi" style="left:493.9px;top:220.2px"><span class="sx" style="--s:var(--ms)">Obtener información</span></div>
<div class="mi ms" style="left:500px;width:110.6px;text-align:right;top:220.2px"><span class="sx" style="--s:var(--ms);transform-origin:right center">Espacio</span></div>
<div class="mi" style="left:493.9px;top:238.3px"><span class="sx" style="--s:var(--ms)">Cambiar nombre</span></div>
<div class="mi ms" style="left:500px;width:110.6px;text-align:right;top:238.3px"><span class="sx" style="--s:var(--ms);transform-origin:right center">Ctrl+Intro</span></div>
<div class="mi" style="left:493.9px;top:256.7px"><span class="sx" style="--s:var(--ms)">Eliminar</span></div>
<div class="mi ms" style="left:500px;width:110.6px;text-align:right;top:256.7px"><span class="sx" style="--s:var(--ms);transform-origin:right center">Alt+Tecla de retroceso</span></div>
<div class="mi" style="left:493.9px;top:274.8px"><span class="sx" style="--s:var(--ms)">Comprimir archivos seleccionados</span></div>
<div class="mi" style="left:493.9px;top:293.5px"><span class="sx" style="--s:var(--ms)">Compartir con Linux</span></div>
<div class="mi" style="left:493.9px;top:316.6px"><span class="sx" style="--s:var(--ms)">Nueva carpeta</span></div>
<div class="mi ms" style="left:500px;width:110.6px;text-align:right;top:316.6px"><span class="sx" style="--s:var(--ms);transform-origin:right center">Ctrl+E</span></div>
<div class="shelf"></div>
<div class="launch"><i></i></div>
<svg class="abs" style="left:353.7px;top:547.5px" width="26" height="26" viewBox="0 0 26 26">
<defs><clipPath id="cc"><circle cx="13" cy="13" r="12"/></clipPath></defs>
<g clip-path="url(#cc)">
<path d="M13 13 L-3 3.8 L13 -8 L29 3.8 L25 8 H13 Z" fill="#db4437"/>
<path d="M13 13 L25 8 L30 4 L30 30 L8 30 Z" fill="#f4c20d"/>
<path d="M13 13 L8.6 26 L4 30 L-6 30 L-3 3.8 L2.5 6.5 Z" fill="#0f9d58"/>
<path d="M13 13 L2.3 6.8 L-3 3.8 L-6 30 L7 30 Z" fill="#0f9d58"/>
</g>
<path d="M13 1 A12 12 0 0 1 23.4 7 H13 Z" fill="#db4437"/>
<circle cx="13" cy="13" r="5.6" fill="#f1f1f1"/><circle cx="13" cy="13" r="4.4" fill="#4285f4"/></svg>
<svg class="abs" style="left:390px;top:549.8px" width="26" height="22" viewBox="0 0 26 22">
<rect x="2" y="2.6" width="22" height="16.4" rx="1" fill="#e9e6e4"/>
<path d="M2 19 V3.6 q0 -1 1 -1 h1.4 V19 Z M24 19 V3.6 q0 -1 -1 -1 h-1.4 V19 Z" fill="#d93025"/>
<path d="M2.4 3 L13 11.6 L23.6 3 L23.6 6.4 L13 14.8 L2.4 6.4 Z" fill="#d93025"/></svg>
<svg class="abs" style="left:428px;top:547.8px" width="22" height="27" viewBox="0 0 22 27">
<path d="M3.6 1.4 h9.6 l5.4 5.4 v16.4 q0 1.4 -1.4 1.4 h-13.6 q-1.4 0 -1.4 -1.4 v-20.4 q0 -1.4 1.4 -1.4 z" fill="#4a7fe6"/>
<path d="M13.2 1.4 l5.4 5.4 h-4 q-1.4 0 -1.4 -1.4 z" fill="#a9c3f5"/>
<path d="M6.4 12 h8.4 v1.3 h-8.4 z M6.4 14.5 h8.4 v1.3 h-8.4 z M6.4 17 h6 v1.3 h-6 z" fill="#dbe6fb"/></svg>
<svg class="abs" style="left:464px;top:551.8px" width="22" height="18" viewBox="0 0 22 18">
<rect x="1.6" y="2.4" width="18.8" height="13.2" rx="3.6" fill="#e4140f"/><path d="M9 5.8 L14.2 9 L9 12.2 Z" fill="#fff"/></svg>
<svg class="abs" style="left:498px;top:548px" width="26" height="26" viewBox="0 0 26 26">
<circle cx="13" cy="13" r="11.6" fill="#fbfbfb"/>
<path d="M8.2 6 L14.6 13 L8.2 20 Z" fill="#2fb7e8"/>
<path d="M8.2 6 L16.6 10.9 L14.6 13 Z" fill="#34a853"/>
<path d="M8.2 20 L16.6 15.1 L14.6 13 Z" fill="#ea4335"/>
<path d="M16.6 10.9 L20 13 L16.6 15.1 L14.6 13 Z" fill="#fbbc04"/></svg>
<svg class="abs" style="left:534px;top:548px" width="26" height="26" viewBox="0 0 26 26">
<circle cx="13" cy="13" r="11.6" fill="#4a80e8"/>
<path d="M7 8.6 q0 -1 1 -1 h3.4 l1.6 1.6 h5 q1 0 1 1 v7 q0 1 -1 1 h-10 q-1 0 -1 -1 z" fill="#eef3fd"/></svg>
<svg class="abs" style="left:571px;top:548px" width="26" height="26" viewBox="0 0 26 26">
<circle cx="13" cy="13" r="11.4" fill="#54372b"/>
<path d="M7.4 9.6 L11.6 12 L7.4 14.4" fill="none" stroke="#fff" stroke-width="1.5"/><path d="M12.6 15.6 h5" stroke="#fff" stroke-width="1.5"/></svg>
<div class="abs" style="left:602.5px;top:553px;width:1px;height:14px;background:#33254a"></div>
<svg class="abs" style="left:608.4px;top:547px" width="24" height="28" viewBox="0 0 24 28">
<path d="M8.6 7.4 v-1.6 q0 -2.2 3.4 -2.2 q3.4 0 3.4 2.2 v1.6" fill="none" stroke="#a49c92" stroke-width="1.3"/>
<path d="M4.4 7.2 h15.2 l1.4 15.4 q.1 1.2 -1.1 1.2 h-15.8 q-1.2 0 -1.1 -1.2 z" fill="#d9d6cc"/>
<path d="M4.4 7.2 h15.2 l.2 2 h-15.6 z" fill="#c3bfb3"/>
<circle cx="12" cy="15.6" r="4.6" fill="#7f97d8"/><rect x="9.6" y="13.2" width="4.8" height="4.8" rx="1" fill="#a9b9e6"/></svg>
<svg class="abs" style="left:644px;top:548px" width="26" height="26" viewBox="0 0 26 26">
<circle cx="13" cy="13" r="11.6" fill="#fbfbfb"/>
<path d="M19.8 8.6 q-.8 .4 -1.6 .5 q.9 -.6 1.2 -1.5 q-.8 .5 -1.8 .7 a2.8 2.8 0 0 0 -4.8 2.5 q-3.4 -.2 -5.7 -2.9 q-1.1 2.200 .9 3.700 q-.7 0 -1.300 -.4 q0 2.100 2.200 2.800 q-.6 .2 -1.200 .050 q.600 1.700 2.600 1.900 q-1.800 1.400 -4.100 1.200 q2.000 1.300 4.300 1.300 q7.000 -.3 7.900 -7.400 v-.600 q.800 -.6 1.400 -1.850 z" fill="#1da1f2"/></svg>
<div class="abs" style="left:365.5px;top:574.2px;width:3px;height:1.2px;background:#9a93a6"></div>
<div class="abs" style="left:400.5px;top:574.2px;width:3px;height:1.2px;background:#9a93a6"></div>
<div class="abs" style="left:544.0px;top:574.2px;width:6px;height:1.2px;background:#ffffff"></div>
<div class="abs" style="left:582.5px;top:574.2px;width:3px;height:1.2px;background:#9a93a6"></div>
<div class="abs" style="left:618.5px;top:574.2px;width:3px;height:1.2px;background:#9a93a6"></div>
<div class="abs" style="left:655.5px;top:574.2px;width:3px;height:1.2px;background:#9a93a6"></div>
<div class="tray"></div>
<div class="tt" style="left:940.4px;top:553.6px"><span class="sx" style="--s:.92">ES</span></div>
<div class="tt" style="left:992.3px;top:553.6px"><span class="sx" style="--s:.95">12:25</span></div>
<svg class="abs" style="left:952px;top:553px;will-change:transform" width="36" height="14" viewBox="952 553 36 14">
<circle cx="959.6" cy="560.1" r="4.6" fill="#f4f2f6"/>
<text x="959.6" y="562.4" font-family="Liberation Sans, sans-serif" font-weight="bold" font-size="6.4" text-anchor="middle" fill="#3a2c4a">5</text>
<path d="M969.6 557.6 q4.400 -3.100 8.800 0 l-4.400 5.600 z" fill="#f4f2f6"/>
<path d="M984.9 556.3 h1.8 v1 h1.2 v6.4 h-4.200 v-6.400 h1.200 z" fill="#f4f2f6"/><path d="M984.0 557.5 h3.6 v2.2 h-3.600 z" fill="#cfc8d8"/>
</svg>
</body></html>
